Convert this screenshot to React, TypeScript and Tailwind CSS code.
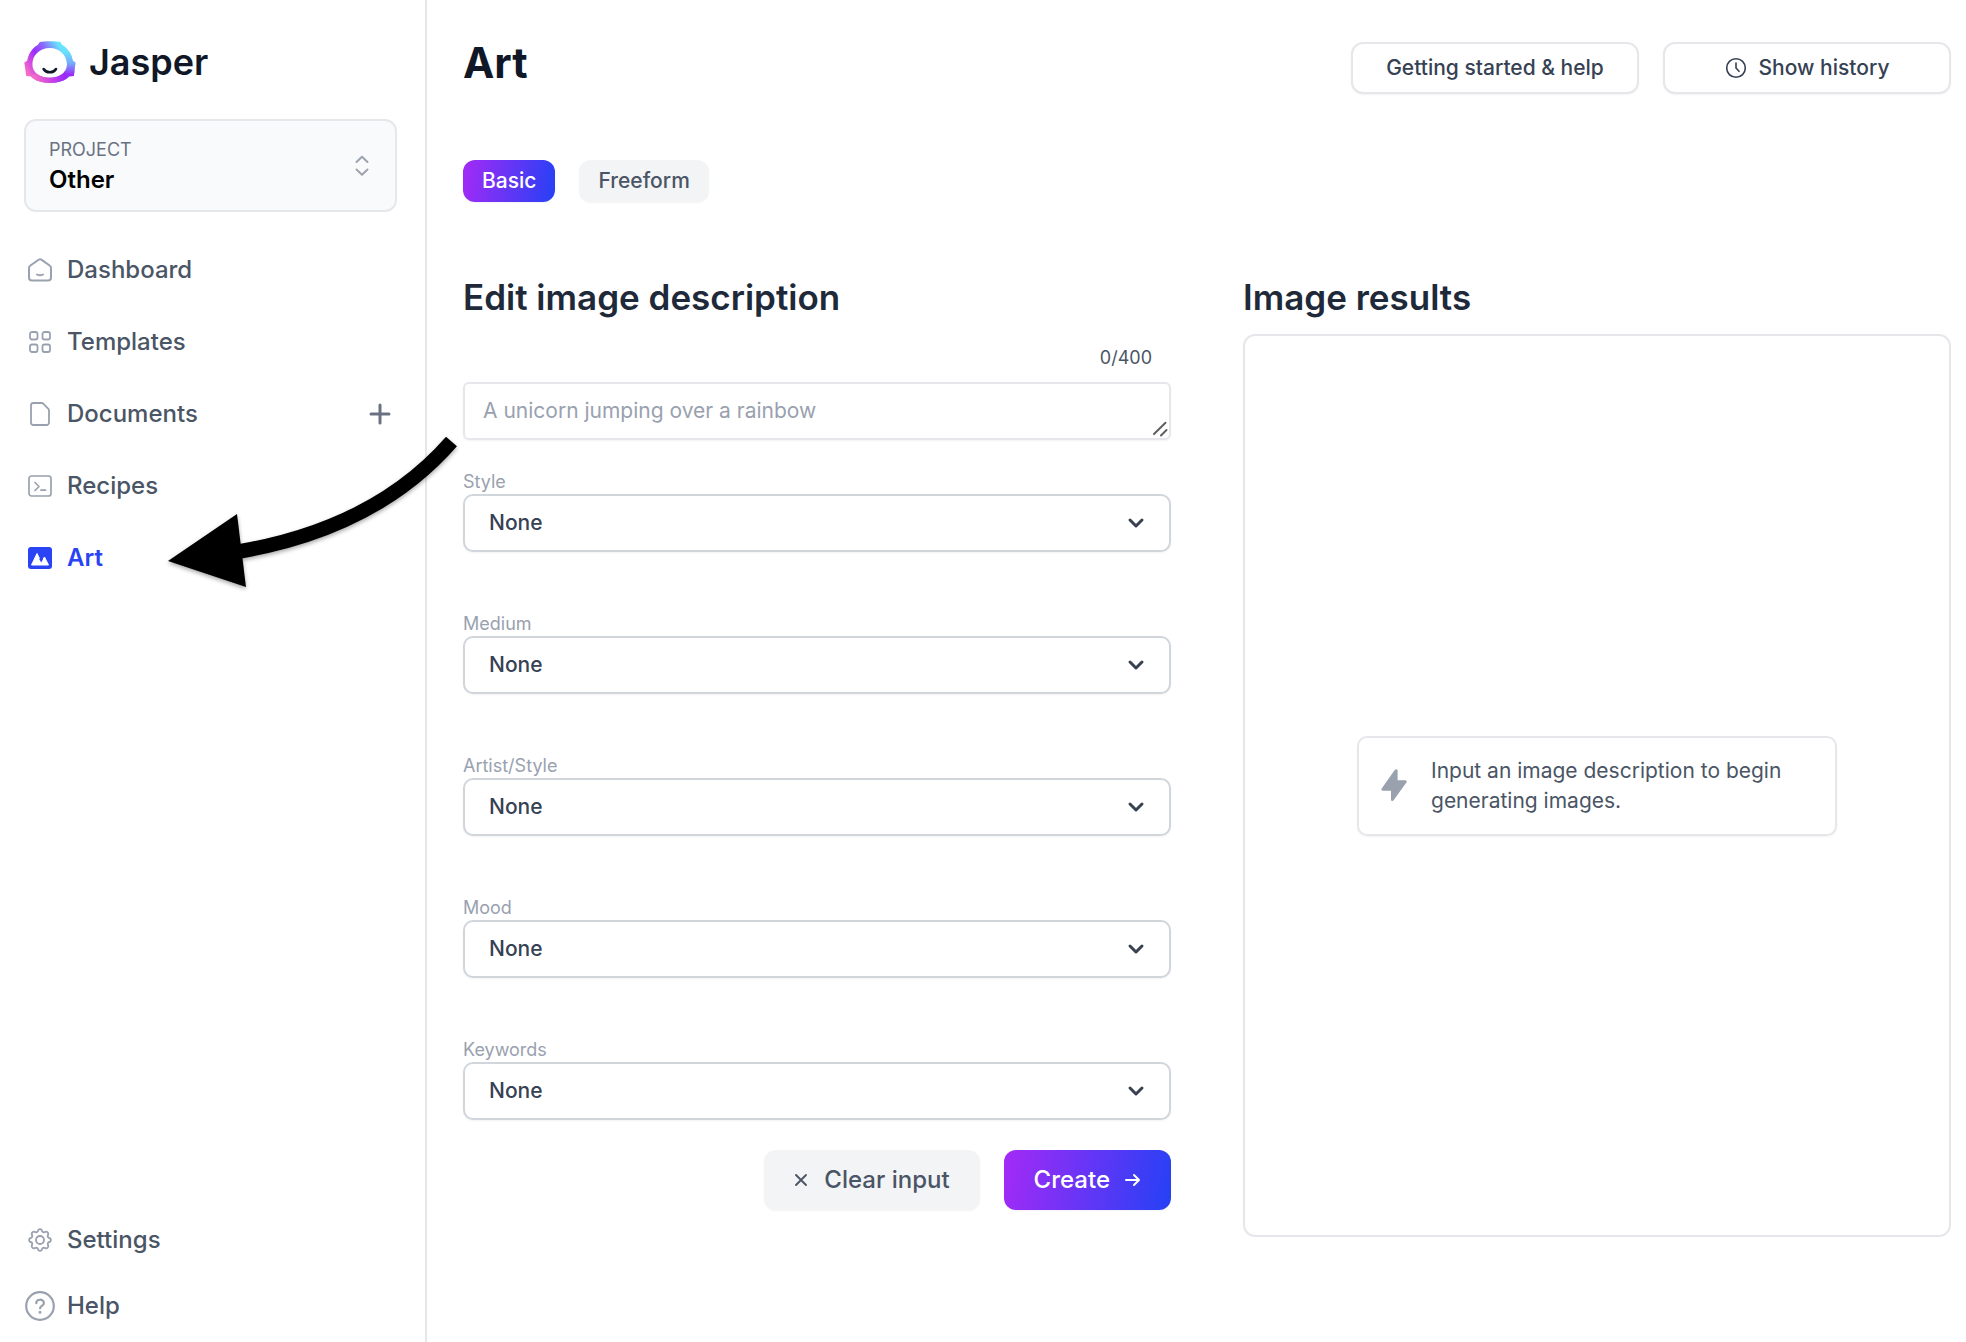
import { useState, type ReactNode } from "react";

const selectFields = ["Style", "Medium", "Artist/Style", "Mood", "Keywords"];

export default function App() {
  return (
    <div className="relative flex min-h-screen bg-white font-['Inter',sans-serif] text-gray-600">
      <Sidebar />
      <main className="min-w-0 flex-1 pt-[42px] pr-[15px] pl-9">
        <header className="flex items-start justify-between">
          <h1 className="text-[42px] leading-[42px] font-bold text-gray-900">Art</h1>
          <div className="flex gap-6">
            <HeaderButton>Getting started &amp; help</HeaderButton>
            <HeaderButton>
              <ClockIcon />
              Show history
            </HeaderButton>
          </div>
        </header>
        <ModeTabs />
        <div className="mt-[75px] grid grid-cols-2 gap-[72px]">
          <DescriptionForm />
          <ImageResults />
        </div>
      </main>
      <PointerArrow />
    </div>
  );
}

function Sidebar() {
  return (
    <aside className="flex w-[427px] shrink-0 flex-col border-r-2 border-gray-200 pt-[41px] pr-7 pb-[3px] pl-6">
      <a href="#" className="flex h-[42px] items-center gap-[13px]">
        <JasperLogo />
        <span className="text-4xl leading-10 font-semibold text-gray-900">Jasper</span>
      </a>
      <button
        type="button"
        className="mt-9 flex h-[93px] items-center justify-between rounded-xl border-2 border-gray-200 bg-gray-50 pr-[25px] pl-[23px] text-left"
      >
        <span>
          <span className="block text-lg leading-7 text-gray-500">PROJECT</span>
          <span className="block text-2xl leading-8 font-semibold text-black">Other</span>
        </span>
        <SelectorIcon />
      </button>
      <nav className="mt-[22px]">
        <NavItem icon={<HomeIcon />} label="Dashboard" />
        <NavItem icon={<TemplatesIcon />} label="Templates" />
        <NavItem
          icon={<DocumentIcon />}
          label="Documents"
          action={
            <button type="button" aria-label="New document" className="mr-1.5 text-gray-500">
              <PlusIcon />
            </button>
          }
        />
        <NavItem icon={<RecipesIcon />} label="Recipes" />
        <NavItem icon={<ArtIcon />} label="Art" active />
      </nav>
      <nav className="mt-auto">
        <NavItem icon={<GearIcon />} label="Settings" compact />
        <NavItem icon={<HelpIcon />} label="Help" compact />
      </nav>
    </aside>
  );
}

interface NavItemProps {
  icon: ReactNode;
  label: string;
  action?: ReactNode;
  active?: boolean;
  compact?: boolean;
}

function NavItem({ icon, label, action, active, compact }: NavItemProps) {
  return (
    <div className={`flex items-center justify-between ${compact ? "h-[66px]" : "h-[72px]"}`}>
      <a
        href="#"
        className={`flex items-center gap-[11px] text-2xl leading-8 ${
          active ? "font-semibold text-[#2943f5]" : "font-medium text-gray-600"
        }`}
      >
        <span className={`flex w-8 justify-center ${active ? "" : "text-gray-400"}`}>{icon}</span>
        {label}
      </a>
      {action}
    </div>
  );
}

function HeaderButton({ children }: { children: ReactNode }) {
  return (
    <button
      type="button"
      className="flex h-[52px] w-72 items-center justify-center gap-3 rounded-xl border-2 border-gray-200 bg-white text-[21px] font-medium text-gray-700 shadow-xs"
    >
      {children}
    </button>
  );
}

function ModeTabs() {
  const [mode, setMode] = useState("Basic");

  return (
    <div className="mt-[66px] flex gap-6">
      {["Basic", "Freeform"].map((name) => (
        <button
          key={name}
          type="button"
          onClick={() => setMode(name)}
          className={`h-[42px] rounded-xl px-[19px] text-[21px] font-medium shadow-xs ${
            mode === name
              ? "bg-linear-[100deg] from-[#a42af6] to-[#2541f5] text-white"
              : "bg-gray-100 text-gray-600"
          }`}
        >
          {name}
        </button>
      ))}
    </div>
  );
}

function DescriptionForm() {
  const [text, setText] = useState("");

  return (
    <form className="pb-[27px]" onSubmit={(e) => e.preventDefault()}>
      <h2 className="text-[35px] leading-10 font-semibold text-gray-800">
        <label htmlFor="description">Edit image description</label>
      </h2>
      <div className="mt-[29px] pr-[19px] text-right text-lg leading-6">{text.length}/400</div>
      <div className="relative mt-3">
        <textarea
          id="description"
          rows={1}
          maxLength={400}
          value={text}
          onChange={(e) => setText(e.target.value)}
          placeholder="A unicorn jumping over a rainbow"
          className="block h-[58px] w-full resize-none rounded-md border-2 border-gray-200 px-[18px] py-[11px] text-[21px] leading-8 shadow-xs placeholder:text-gray-400"
        />
        <ResizeGrip />
      </div>
      <div className="mt-[30px] flex flex-col gap-[60px]">
        {selectFields.map((label) => (
          <SelectField key={label} label={label} />
        ))}
      </div>
      <div className="mt-[30px] flex justify-end gap-6">
        <button
          type="button"
          onClick={() => setText("")}
          className="flex h-[60px] items-center gap-4 rounded-xl bg-gray-100 px-[30px] text-2xl font-medium text-gray-600 shadow-xs"
        >
          <CrossIcon />
          Clear input
        </button>
        <button
          type="submit"
          className="flex h-[60px] items-center gap-[13px] rounded-xl bg-linear-[100deg] from-[#a42af6] to-[#2541f5] px-[30px] text-2xl font-medium text-white shadow-xs"
        >
          Create
          <ArrowRightIcon />
        </button>
      </div>
    </form>
  );
}

function SelectField({ label }: { label: string }) {
  return (
    <div>
      <label htmlFor={label} className="block text-lg leading-6 text-gray-400">
        {label}
      </label>
      <div className="relative">
        <select
          id={label}
          className="block h-[58px] w-full appearance-none rounded-[10px] border-2 border-gray-300 bg-white pr-16 pl-6 text-[21px] font-medium text-gray-700 shadow-xs"
        >
          <option>None</option>
        </select>
        <svg
          viewBox="0 0 20 14"
          className="pointer-events-none absolute top-[22px] right-[25px] h-3.5 w-5"
          fill="none"
          stroke="#374151"
          strokeWidth="3"
          strokeLinecap="round"
          strokeLinejoin="round"
        >
          <path d="M4 4 10 10 16 4" />
        </svg>
      </div>
    </div>
  );
}

function ImageResults() {
  return (
    <section className="flex flex-col">
      <h2 className="text-[35px] leading-10 font-semibold text-gray-800">Image results</h2>
      <div className="mt-[17px] flex flex-1 items-center justify-center rounded-xl border-2 border-gray-200">
        <div className="flex w-[480px] items-center gap-6 rounded-[10px] border-2 border-gray-200 py-[18px] pr-4 pl-[22px] shadow-xs">
          <svg viewBox="0 0 26 33" className="h-[33px] w-[26px] shrink-0 fill-gray-400">
            <path d="M16.6 1.6v9.6h7.6a1.5 1.5 0 0 1 1.2 2.4L12.6 31.3c-.8 1.1-2.6.7-2.6-.9v-8.6H1.9a1.5 1.5 0 0 1-1.2-2.4L13.9.8c.9-1.2 2.7-.6 2.7.8Z" />
          </svg>
          <p className="text-[21px] leading-[30px]">
            Input an image description to begin generating images.
          </p>
        </div>
      </div>
    </section>
  );
}

function JasperLogo() {
  return (
    <svg viewBox="0 0 52 42" className="h-[42px] w-[52px]">
      <defs>
        <linearGradient id="logo-top" gradientUnits="userSpaceOnUse" x1="2" y1="30" x2="43" y2="4">
          <stop offset="0" stopColor="#f56dc6" />
          <stop offset="0.15" stopColor="#d94fdd" />
          <stop offset="0.36" stopColor="#9c2cfa" />
          <stop offset="0.6" stopColor="#8a6ffb" />
          <stop offset="0.85" stopColor="#68e3fd" />
        </linearGradient>
        <linearGradient id="logo-bottom" gradientUnits="userSpaceOnUse" x1="6" y1="38" x2="48" y2="27">
          <stop offset="0.1" stopColor="#f56dc6" />
          <stop offset="0.5" stopColor="#c73fe8" />
          <stop offset="0.8" stopColor="#9b27f9" />
          <stop offset="1" stopColor="#8d50fb" />
        </linearGradient>
        <linearGradient id="logo-side" gradientUnits="userSpaceOnUse" x1="0" y1="11" x2="0" y2="34">
          <stop offset="0" stopColor="#68e3fd" />
          <stop offset="0.5" stopColor="#78a8fc" />
          <stop offset="1" stopColor="#9b27f9" />
        </linearGradient>
        <clipPath id="logo-ring">
          <path
            clipRule="evenodd"
            d="M15.500 1.200C19 0 33.500 0 36.500 1.200L38 3.800C43.500 7 47.500 12.500 48.800 19.800L51.500 21.500 49.800 35 45.300 35.300C41 40 34 42 26 42S11 40 6.800 35.300L2.200 35 .3 21.500 3.200 19.800C4.500 12.500 8.500 7 14 3.800ZM25.700 7C16 7 8.400 14 8.400 23.300 8.400 31.500 15 36.700 25.700 36.700S43 31.500 43 23.300C43 14 35.400 7 25.700 7Z"
          />
        </clipPath>
      </defs>
      <g clipPath="url(#logo-ring)">
        <rect width="52" height="42" fill="url(#logo-top)" />
        <path d="M0 36 26 30 52 30V42H0Z" fill="url(#logo-bottom)" />
        <path d="M38 11H52V36H46L38 28Z" fill="url(#logo-side)" />
      </g>
      <path
        d="M19.600 28c2.800 4.400 9.600 4.400 12.400 0"
        fill="none"
        stroke="#111827"
        strokeWidth="2.600"
        strokeLinecap="round"
      />
    </svg>
  );
}

function SelectorIcon() {
  return (
    <svg
      viewBox="0 0 16 24"
      className="h-6 w-4"
      fill="none"
      stroke="#9ca3af"
      strokeWidth="2"
      strokeLinecap="round"
      strokeLinejoin="round"
    >
      <path d="M2.500 8 8 2.800 13.500 8M2.500 15.500 8 20.700l5.500-5.200" />
    </svg>
  );
}

function HomeIcon() {
  return (
    <svg
      viewBox="0 0 26 26"
      className="size-[26px]"
      fill="none"
      stroke="currentColor"
      strokeWidth="2"
      strokeLinecap="round"
      strokeLinejoin="round"
    >
      <path d="M2 11a3 3 0 0 1 1.400-2.500l8.200-5.800a2.500 2.500 0 0 1 2.800 0l8.200 5.800A3 3 0 0 1 24 11v9.500a3 3 0 0 1-3 3H5a3 3 0 0 1-3-3Z" />
      <path d="M10 17.500c1.800 1 4.200 1 6 0" />
    </svg>
  );
}

function TemplatesIcon() {
  return (
    <svg viewBox="0 0 24 24" className="size-6" fill="none" stroke="currentColor" strokeWidth="1.800">
      <rect x="2" y="2" width="7.500" height="7.500" rx="2" />
      <rect x="14.500" y="2" width="7.500" height="7.500" rx="2" />
      <rect x="2" y="14.500" width="7.500" height="7.500" rx="2" />
      <rect x="14.500" y="14.500" width="7.500" height="7.500" rx="2" />
    </svg>
  );
}

function DocumentIcon() {
  return (
    <svg
      viewBox="0 0 24 26"
      className="h-[26px] w-6"
      fill="none"
      stroke="currentColor"
      strokeWidth="1.800"
      strokeLinejoin="round"
    >
      <path d="M3 4.500A2.500 2.500 0 0 1 5.500 2h8.300a2 2 0 0 1 1.400.6l5.200 5.200a2 2 0 0 1 .6 1.400v12.300a2.500 2.500 0 0 1-2.500 2.500h-13A2.500 2.500 0 0 1 3 21.500Z" />
    </svg>
  );
}

function RecipesIcon() {
  return (
    <svg
      viewBox="0 0 24 22"
      className="h-[22px] w-6"
      fill="none"
      stroke="currentColor"
      strokeWidth="1.700"
      strokeLinecap="round"
      strokeLinejoin="round"
    >
      <rect x="1" y="1" width="22" height="20" rx="2.500" />
      <path d="M7 7.500l4 4-4 4M13 15.200h4.500" />
    </svg>
  );
}

function ArtIcon() {
  return (
    <svg viewBox="0 0 24 22" className="h-[22px] w-6">
      <rect width="24" height="22" rx="3" fill="#2943f5" />
      <path d="M3.500 18 9 6.500 13.200 14.800 16.500 10 20.500 18Z" fill="#fff" stroke="#fff" strokeLinejoin="round" />
      <path d="M11 11.500 13.200 15.500 15 12Z" fill="#2943f5" />
    </svg>
  );
}

function GearIcon() {
  return (
    <svg
      viewBox="0 0 24 24"
      className="size-6"
      fill="none"
      stroke="currentColor"
      strokeWidth="1.800"
      strokeLinejoin="round"
    >
      <path d="M10 2.700c.5-2.200 3.500-2.200 4 0a2 2 0 0 0 3 1.300c1.900-1.200 4.200 1.100 3 3a2 2 0 0 0 1.300 3c2.200.5 2.200 3.500 0 4a2 2 0 0 0-1.300 3c1.200 1.900-1.100 4.200-3 3a2 2 0 0 0-3 1.300c-.5 2.200-3.500 2.200-4 0A2 2 0 0 0 7 20c-1.900 1.200-4.200-1.100-3-3a2 2 0 0 0-1.300-3c-2.200-.5-2.200-3.500 0-4A2 2 0 0 0 4 7c-1.200-1.900 1.100-4.200 3-3a2 2 0 0 0 3-1.300Z" />
      <circle cx="12" cy="12" r="4" />
    </svg>
  );
}

function HelpIcon() {
  return (
    <svg
      viewBox="0 0 30 30"
      className="size-[30px]"
      fill="none"
      stroke="currentColor"
      strokeWidth="2.200"
      strokeLinecap="round"
    >
      <circle cx="15" cy="15" r="13.800" />
      <path d="M11.300 12.200c0-4.600 7.600-4.600 7.600-.2 0 2.900-3.800 2.900-3.800 5.300" />
      <circle cx="15" cy="21.200" r="0.800" fill="currentColor" strokeWidth="1.400" />
    </svg>
  );
}

function PlusIcon() {
  return (
    <svg viewBox="0 0 22 22" className="size-[22px]" stroke="currentColor" strokeWidth="3" strokeLinecap="round">
      <path d="M11 2v18M2 11h18" />
    </svg>
  );
}

function ClockIcon() {
  return (
    <svg
      viewBox="0 0 22 22"
      className="size-[22px]"
      fill="none"
      stroke="currentColor"
      strokeWidth="1.600"
      strokeLinecap="round"
      strokeLinejoin="round"
    >
      <circle cx="11" cy="11" r="9.300" />
      <path d="M11 6v5l3 3.300" />
    </svg>
  );
}

function CrossIcon() {
  return (
    <svg viewBox="0 0 14 14" className="size-3.5" stroke="currentColor" strokeWidth="1.900" strokeLinecap="round">
      <path d="M2 2l10 10M12 2 2 12" />
    </svg>
  );
}

function ArrowRightIcon() {
  return (
    <svg
      viewBox="0 0 18 14"
      className="h-3.5 w-[18px]"
      fill="none"
      stroke="currentColor"
      strokeWidth="2"
      strokeLinecap="round"
      strokeLinejoin="round"
    >
      <path d="M3 7h13M11 2l5 5-5 5" />
    </svg>
  );
}

function ResizeGrip() {
  return (
    <svg
      viewBox="0 0 16 16"
      className="pointer-events-none absolute right-[3px] bottom-[3px] size-4"
      stroke="#5f5f5f"
      strokeWidth="2"
      strokeLinecap="round"
    >
      <path d="M2 13 13.500 1.800M9 14.500 14.500 9" />
    </svg>
  );
}

// Annotation drawn over the page, pointing at the Art entry of the sidebar
function PointerArrow() {
  return (
    <svg
      viewBox="0 0 300 160"
      className="pointer-events-none absolute top-[433px] left-[163px] h-40 w-[300px] drop-shadow-[0_2px_2px_rgba(0,0,0,0.35)]"
    >
      <path d="M288.500 8.500Q213 95 76 118.500" fill="none" stroke="#000" strokeWidth="14.500" />
      <path d="M5 128 74 81 83 154Z" />
    </svg>
  );
}
